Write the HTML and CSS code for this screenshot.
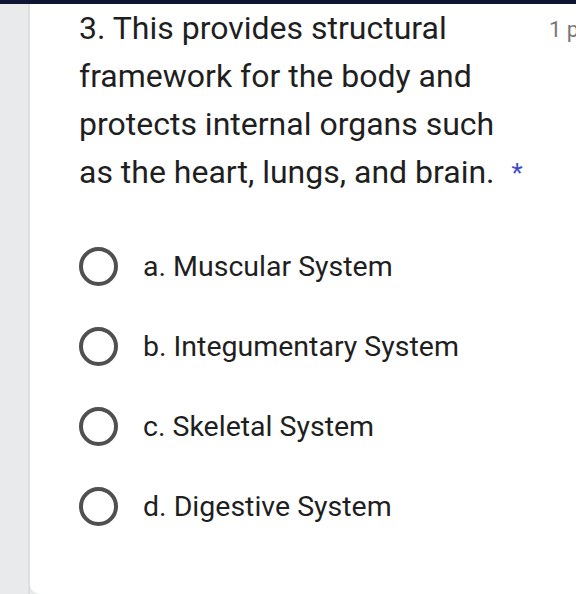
FILE: index.html
```html
<!DOCTYPE html>
<html>
<head>
<meta charset="utf-8">
<link rel="stylesheet" href="styles.css">
</head>
<body>
<div class="topbar"></div>
<div class="page">
  <div class="gutter"></div>
  <div class="card">
    <div class="head">
      <div class="question">3. This provides structural framework for the body and protects internal organs such as the heart, lungs, and brain.<span class="req">*</span></div>
      <div class="points">1 p</div>
    </div>
    <div class="options">
      <div class="option"><span class="radio"></span><span class="label">a. Muscular System</span></div>
      <div class="option"><span class="radio"></span><span class="label">b. Integumentary System</span></div>
      <div class="option"><span class="radio"></span><span class="label">c. Skeletal System</span></div>
      <div class="option"><span class="radio"></span><span class="label">d. Digestive System</span></div>
    </div>
  </div>
</div>
</body>
</html>
```
FILE: styles.css
```css
html, body {
  margin: 0;
  padding: 0;
  width: 576px;
  height: 594px;
  overflow: hidden;
  background: #e8eaeb;
  font-family: Roboto, "Liberation Sans", sans-serif;
}
.topbar {
  height: 4px;
  background: #0e1431;
}
.page {
  display: flex;
  height: 590px;
}
.gutter {
  width: 28px;
  flex: none;
  border-right: 2px solid #dcdfe0;
}
.card {
  flex: 1;
  background: #fff;
  border-bottom-left-radius: 10px;
  padding-left: 49px;
  position: relative;
  overflow: hidden;
}
.head {
  display: flex;
}
.question {
  width: 445px;
  font-size: 32px;
  line-height: 48px;
  color: #1f1f1f;
}
.req {
  color: #3b4bd3;
  font-size: 26px;
  vertical-align: top;
  position: relative;
  top: 1px;
  margin-left: 17px;
}
.points {
  position: absolute;
  left: 519px;
  top: 13px;
  font-size: 22px;
  color: #777;
  white-space: nowrap;
}
.options {
  margin-top: 50px;
  display: flex;
  flex-direction: column;
  gap: 40px;
}
.option {
  display: flex;
  align-items: center;
  height: 40px;
}
.radio {
  width: 31px;
  height: 31px;
  border: 4px solid #505050;
  border-radius: 50%;
  flex: none;
}
.label {
  margin-left: 25px;
  font-size: 28.5px;
  color: #1f1f1f;
}
```
